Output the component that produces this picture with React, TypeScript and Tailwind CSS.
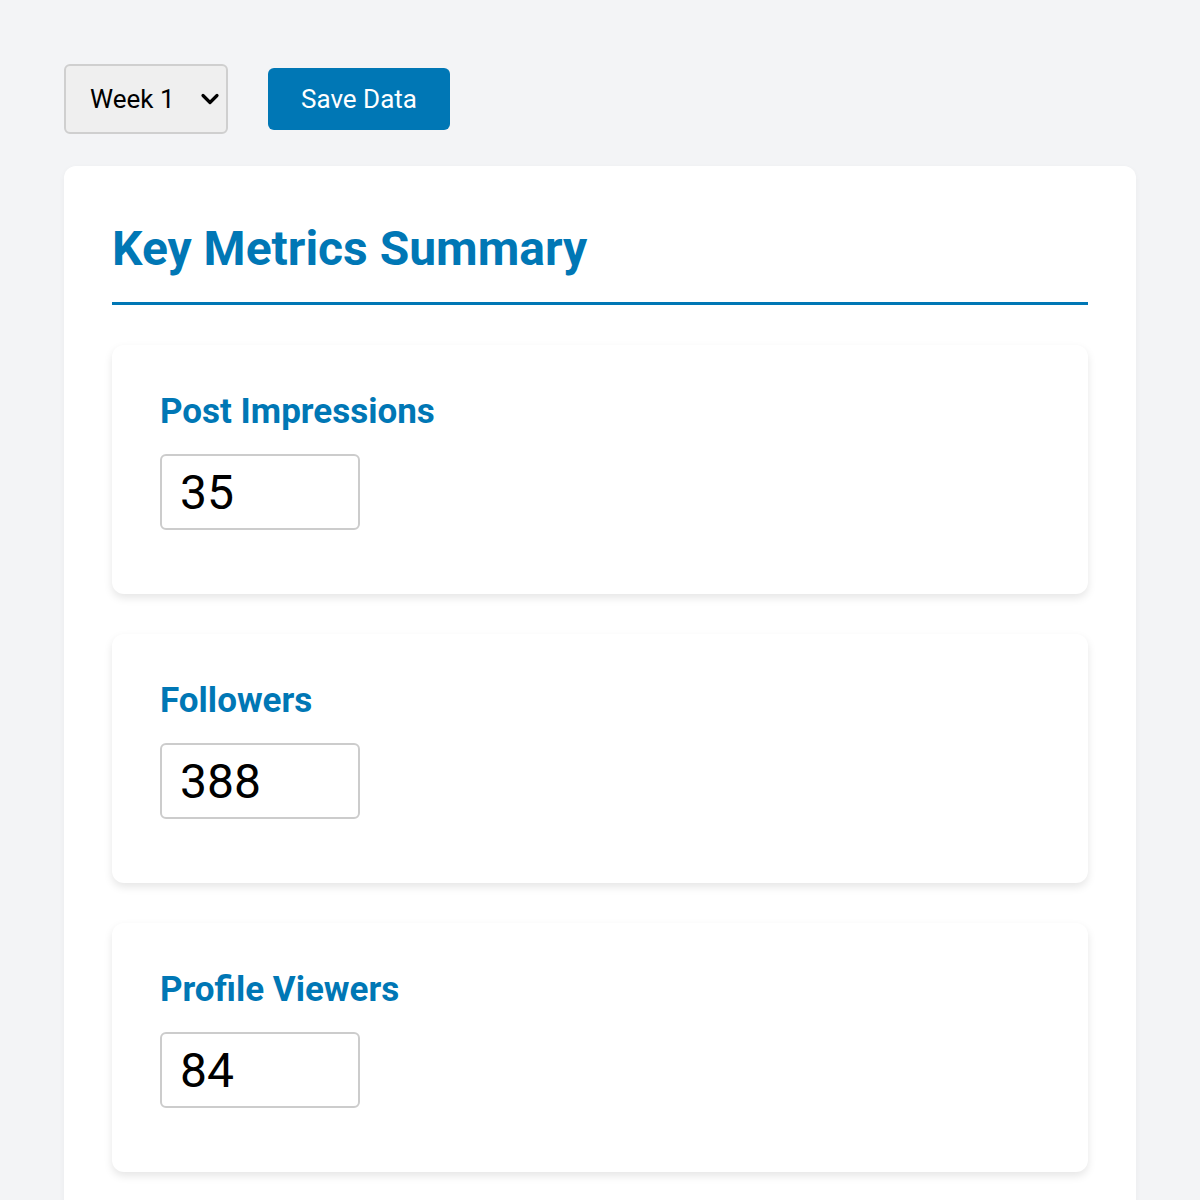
import { useState } from 'react';

const metrics = [
  { label: 'Post Impressions', value: '35' },
  { label: 'Followers', value: '388' },
  { label: 'Profile Viewers', value: '84' },
];

const App = () => {
  const [week, setWeek] = useState('Week 1');
  const [values, setValues] = useState(metrics.map((m) => m.value));

  return (
    <div className="min-h-screen bg-[#f3f4f6] px-16 pt-16 font-['Roboto',sans-serif]">
      <div className="flex items-center gap-10">
        <div className="relative">
          <select
            value={week}
            onChange={(e) => setWeek(e.target.value)}
            className="h-[70px] w-[164px] appearance-none rounded-md border-2 border-[#cfcfcf] bg-[#efefef] pl-[24px] text-[26px] text-black outline-none"
          >
            <option>Week 1</option>
            <option>Week 2</option>
            <option>Week 3</option>
            <option>Week 4</option>
          </select>
          <svg
            className="pointer-events-none absolute right-[8px] top-1/2 -translate-y-1/2"
            width="20"
            height="20"
            viewBox="0 0 20 20"
          >
            <path d="M3 6.5l7 7 7-7" fill="none" stroke="black" strokeWidth="3.2" strokeLinecap="round" strokeLinejoin="round" />
          </svg>
        </div>
        <button className="h-[62px] w-[182px] rounded-md bg-[#0077b5] text-[26px] text-white">
          Save Data
        </button>
      </div>

      <div className="mt-8 rounded-xl bg-white px-12 pt-12 pb-12 shadow-[0_2px_6px_rgba(0,0,0,0.04)]">
        <h2 className="border-b-[3px] border-[#0077b5] pt-[7px] pb-[25px] text-[48px] leading-[56px] font-bold text-[#0077b5]">
          Key Metrics Summary
        </h2>
        <div className="mt-10 flex flex-col gap-10">
          {metrics.map((m, i) => (
            <div key={m.label} className="rounded-xl bg-white px-12 pt-12 pb-16 shadow-[0_4px_8px_rgba(0,0,0,0.1)]">
              <div className="text-[35px] leading-[37px] font-bold text-[#0077b5]">{m.label}</div>
              <input
                type="text"
                value={values[i]}
                onChange={(e) => {
                  const next = [...values];
                  next[i] = e.target.value;
                  setValues(next);
                }}
                className="mt-6 block h-[76px] w-[200px] rounded-md border-2 border-[#cccccc] px-[18px] text-[48px] text-black outline-none"
              />
            </div>
          ))}
        </div>
      </div>
    </div>
  );
};

export default App;
